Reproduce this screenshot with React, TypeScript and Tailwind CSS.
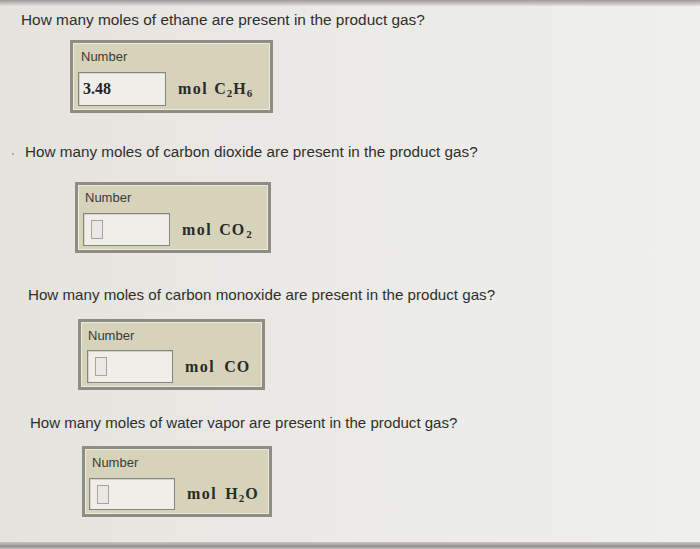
import React from "react";

type BoxProps = {
  box: string;
  input: string;
  labelPad: string;
  value?: string;
  children: React.ReactNode;
};

function AnswerBox({ box, input, labelPad, value, children }: BoxProps) {
  return (
    <div
      className={`border-[3px] border-[#8e8d85] bg-[#d7d3ba] shadow-[inset_0_0_0_1px_#ecead9] ${box}`}
    >
      <div className={`${labelPad} text-[13px] leading-[16px] text-[#3a3a36] font-['Liberation_Sans',Arial,sans-serif]`}>
        Number
      </div>
      <div className="flex items-center">
        <div
          className={`flex items-center border border-[#85847f] bg-[#efeee9] shadow-[inset_1px_1px_0_#d4d3cd] ${input}`}
        >
          {value ? (
            <span className="pl-[4px] text-[16px] font-bold text-[#222] font-['Liberation_Serif','Times_New_Roman',serif]">
              {value}
            </span>
          ) : (
            <span className="ml-[7px] h-[19px] w-[12px] border border-[#a3a3a0] bg-[#e9e8e4]" />
          )}
        </div>
        <div className="ml-[12px] flex items-baseline text-[16px] font-bold text-[#2a2a28] font-['Liberation_Serif','Times_New_Roman',serif]">
          {children}
        </div>
      </div>
    </div>
  );
}

const Sub = ({ children }: { children: React.ReactNode }) => (
  <sub className="relative top-[3px] mx-[1px] text-[11px] align-baseline">{children}</sub>
);

export default function App() {
  const q = "leading-[18px] text-[#2f2f2d] font-['Liberation_Sans',Arial,sans-serif]";
  return (
    <div className="relative flex h-[549px] w-[700px] flex-col overflow-hidden bg-[linear-gradient(90deg,#e4e3de_0%,#eae9e5_40%,#efefed_100%)]">
      <div className="h-[6px] w-full bg-[linear-gradient(180deg,#9c9b98_0%,#b8b7b3_40%,#e2e1dd_100%)]" />

      <div className={`ml-[21px] mt-[5px] text-[15.4px] ${q}`}>How many moles of ethane are present in the product gas?</div>
      <div className="ml-[70px] mt-[11px]">
        <AnswerBox box="h-[73px] w-[203px]" input="h-[34px] w-[88px] ml-[5px]" labelPad="pl-[8px] pt-[6px] pb-[7px]" value="3.48">
          <span className="tracking-[1.5px]">mol</span>
          <span className="ml-[6px]">C</span>
          <Sub>2</Sub>
          <span>H</span>
          <Sub>6</Sub>
        </AnswerBox>
      </div>

      <div className="relative ml-[25px] mt-[30px]">
        <span className="absolute left-[-13px] top-[10px] h-[2px] w-[2px] rounded-full bg-[#9a9a96]" />
        <div className={`text-[15.25px] ${q}`}>How many moles of carbon dioxide are present in the product gas?</div>
      </div>
      <div className="ml-[75px] mt-[21px]">
        <AnswerBox box="h-[71px] w-[196px]" input="h-[33px] w-[87px] ml-[5px]" labelPad="pl-[7px] pt-[5px] pb-[7px]">
          <span className="tracking-[1.5px]">mol</span>
          <span className="ml-[7px] tracking-[1px]">CO</span>
          <Sub>2</Sub>
        </AnswerBox>
      </div>

      <div className={`ml-[28px] mt-[33px] text-[15.15px] ${q}`}>How many moles of carbon monoxide are present in the product gas?</div>
      <div className="ml-[78px] mt-[15px]">
        <AnswerBox box="h-[71px] w-[187px]" input="h-[33px] w-[86px] ml-[6px]" labelPad="pl-[7px] pt-[6px] pb-[6px]">
          <span className="tracking-[1.5px]">mol</span>
          <span className="ml-[9px] tracking-[1px]">CO</span>
        </AnswerBox>
      </div>

      <div className={`ml-[30px] mt-[24px] text-[15.05px] ${q}`}>How many moles of water vapor are present in the product gas?</div>
      <div className="ml-[82px] mt-[14px]">
        <AnswerBox box="h-[71px] w-[190px]" input="h-[32px] w-[86px] ml-[4px]" labelPad="pl-[7px] pt-[6px] pb-[7px]">
          <span className="tracking-[1.5px]">mol</span>
          <span className="ml-[8px]">H</span>
          <Sub>2</Sub>
          <span>O</span>
        </AnswerBox>
      </div>

      <div className="mt-auto h-[7px] w-full bg-[linear-gradient(180deg,#cbc6c3_0%,#a8a5a2_40%,#8f8d8b_60%,#c9c6c3_100%)]" />
    </div>
  );
}
